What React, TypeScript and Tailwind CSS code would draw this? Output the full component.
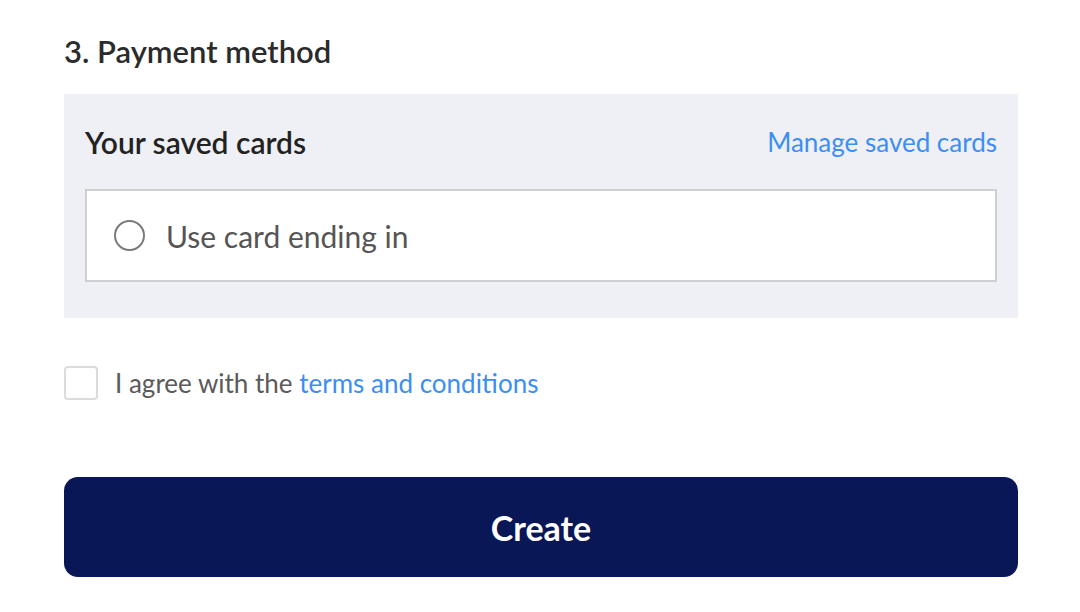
import { useState } from "react";

export default function App() {
  const [agreed, setAgreed] = useState(false);
  const [useCard, setUseCard] = useState(false);

  return (
    <div className="w-[1080px] h-[612px] bg-white font-['Lato','Noto_Sans',sans-serif] pl-16 pr-[62px] pt-[32px]">
      {/* Section title */}
      <h2 className="text-[31px] leading-[38px] font-semibold text-[#2b2b2b]">3. Payment method</h2>

      {/* Saved cards panel */}
      <div className="mt-[24px] bg-[#eff0f5] px-[21px] pt-[28px] pb-[36px]">
        <div className="flex items-center justify-between">
          <span className="text-[30px] leading-[40px] font-semibold text-[#222]">Your saved cards</span>
          <a href="#" className="text-[26px] leading-[40px] text-[#3d8ef2]">
            Manage saved cards
          </a>
        </div>
        <button
          onClick={() => setUseCard(!useCard)}
          className="mt-[27px] w-full h-[93px] flex items-center gap-[21px] bg-white border-2 border-[#cfcfd3] pl-[27px] text-left"
        >
          <span className="w-[31px] h-[31px] rounded-full border-[2.5px] border-[#7a7a7a] flex items-center justify-center">
            {useCard && <span className="w-[15px] h-[15px] rounded-full bg-[#0a1757]" />}
          </span>
          <span className="text-[30px] leading-[36px] text-[#555]">Use card ending in</span>
        </button>
      </div>

      {/* Terms */}
      <label className="mt-[47px] flex items-center gap-[17px] cursor-pointer">
        <span
          onClick={() => setAgreed(!agreed)}
          className="w-[34px] h-[34px] rounded-[4px] border-2 border-[#dcdcdc] bg-white flex items-center justify-center"
        >
          {agreed && <span className="w-[16px] h-[16px] bg-[#0a1757] rounded-sm" />}
        </span>
        <span className="text-[26px] leading-[36px] text-[#5a5a5a]">
          I agree with the <a href="#" className="text-[#3d8ef2]">terms and conditions</a>
        </span>
      </label>

      {/* Submit */}
      <button className="mt-[76px] w-full h-[100px] rounded-[14px] bg-[#091756] text-white text-[34px] font-bold">
        Create
      </button>
    </div>
  );
}
